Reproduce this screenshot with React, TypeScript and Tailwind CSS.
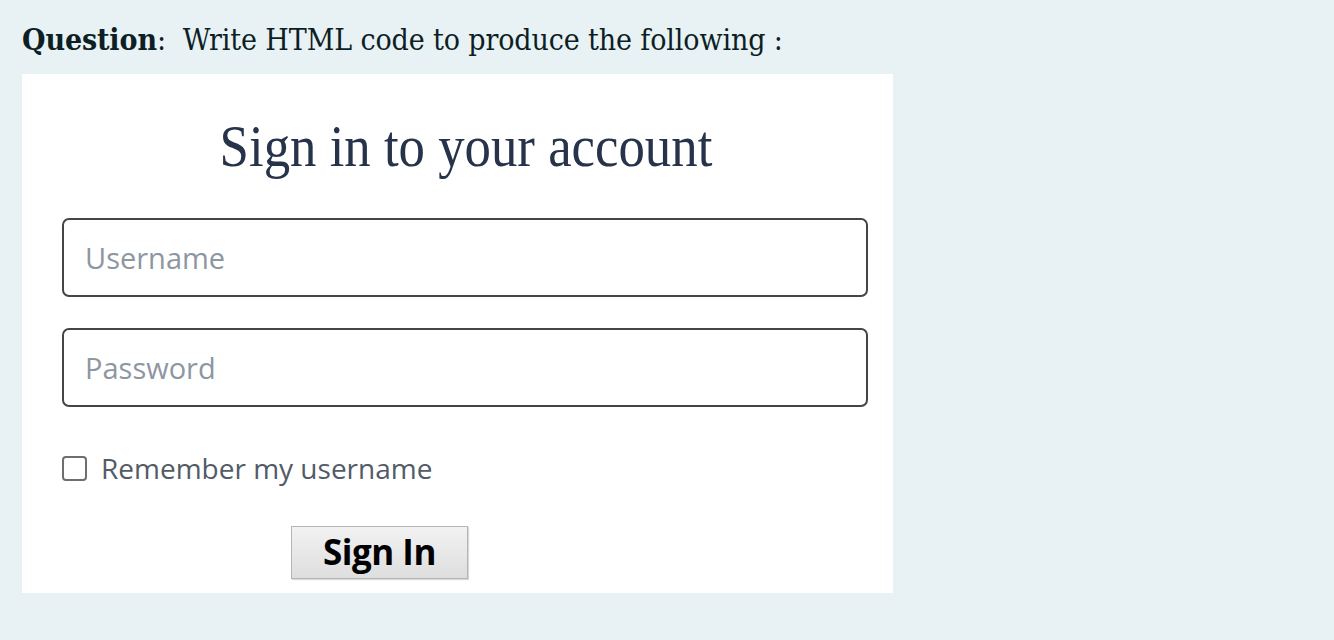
import React from "react";

export default function App() {
  return (
    <div className="w-[1334px] h-[640px] bg-[#e8f1f4] flex flex-col">
      <div
        className="pl-[22px] pt-[20px] h-[74px] text-[30px] leading-[40px] text-[#0d1f24] tracking-[-0.12px] whitespace-nowrap"
        style={{ fontFamily: '"DejaVu Serif", serif', fontStretch: "condensed" }}
      >
        <span className="font-bold">Question</span>
        <span>:&nbsp; Write HTML code to produce the following :</span>
      </div>
      <div className="ml-[22px] w-[871px] h-[519px] bg-white flex flex-col">
        <div className="mt-[42px] mb-[2px] flex justify-center pl-[17px]">
          <h1
            className="text-[60px] leading-[60px] text-[#26334a] scale-x-[0.88] whitespace-nowrap"
            style={{ fontFamily: '"Liberation Serif", serif' }}
          >
            Sign in to your account
          </h1>
        </div>
        <div className="ml-[40px] mt-[40px] flex flex-col gap-[31px]" style={{ fontFamily: '"Open Sans", sans-serif' }}>
          <div className="w-[806px] h-[79px] border-2 border-[#454545] rounded-[7px] flex items-center pl-[21px] text-[29px] text-[#8e96a2]">
            Username
          </div>
          <div className="w-[806px] h-[79px] border-2 border-[#454545] rounded-[7px] flex items-center pl-[21px] text-[29px] text-[#8e96a2]">
            Password
          </div>
        </div>
        <div className="ml-[40px] mt-[43px] flex items-center gap-[14px]" style={{ fontFamily: '"Open Sans", sans-serif' }}>
          <div className="w-[25px] h-[25px] border-2 border-[#6e6e6e] rounded-[4px]" />
          <span className="text-[28px] leading-[36px] text-[#535b66]">Remember my username</span>
        </div>
        <div className="mt-[40px] ml-[269px]">
          <div
            className="w-[177px] h-[53px] border border-[#b5b5b5] bg-gradient-to-b from-[#f2f2f2] to-[#dedede] shadow-[1px_1px_1px_rgba(0,0,0,0.15)] flex items-center justify-center text-[35px] font-bold text-black tracking-[-0.5px]"
            style={{ fontFamily: '"Open Sans", sans-serif' }}
          >
            Sign In
          </div>
        </div>
      </div>
    </div>
  );
}
